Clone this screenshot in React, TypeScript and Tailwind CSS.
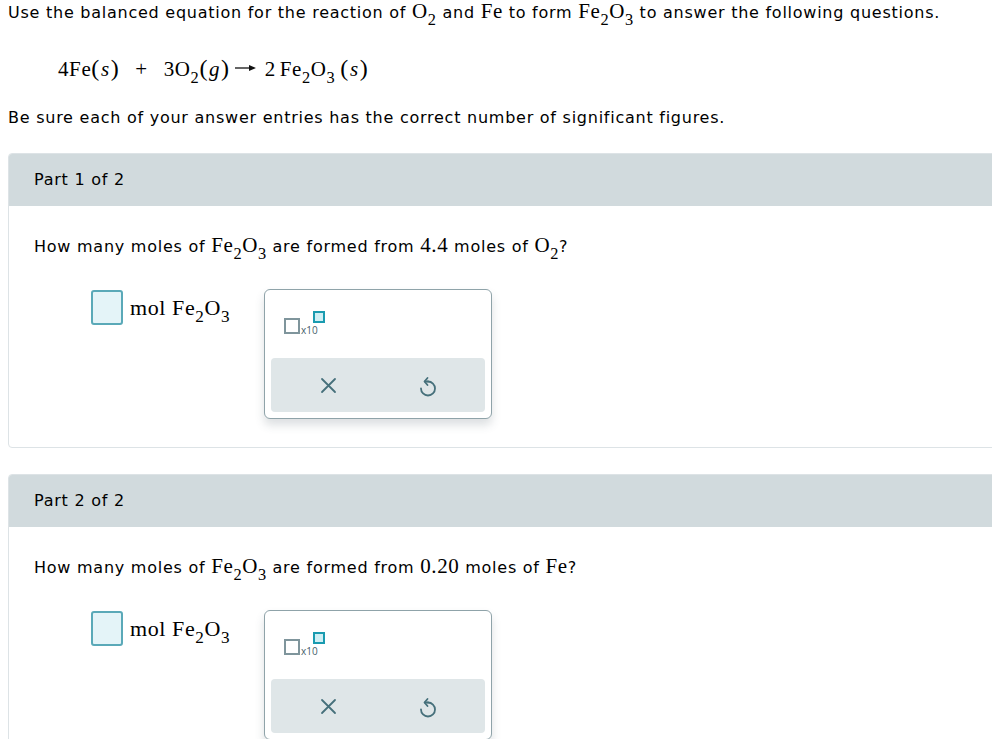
import { ReactNode } from 'react';

const sans = { fontFamily: '"DejaVu Sans", Verdana, sans-serif' };

function M({ children, size = 'text-[21px]' }: { children: ReactNode; size?: string }) {
    return (
        <span className={`${size} leading-none tracking-[0.6px]`} style={{ fontFamily: '"Liberation Serif", "Times New Roman", serif' }}>
            {children}
        </span>
    );
}

function Sub({ children }: { children: ReactNode }) {
    return <sub className="text-[0.78em] -bottom-[0.42em]">{children}</sub>;
}

function Fe2O3() {
    return (
        <M>
            Fe<Sub>2</Sub>O<Sub>3</Sub>
        </M>
    );
}

function Paren({ children }: { children: ReactNode }) {
    return (
        <>
            <span className="text-[24px]">(</span>
            <span className="italic mx-[1px]">{children}</span>
            <span className="text-[24px]">)</span>
        </>
    );
}

function CloseIcon() {
    return (
        <svg width="17" height="17" viewBox="0 0 17 17" fill="none" stroke="#46707b" strokeWidth="1.8" strokeLinecap="round">
            <path d="M2 2L15 15M15 2L2 15" />
        </svg>
    );
}

function ResetIcon() {
    return (
        <svg width="20" height="22" viewBox="0 0 20 22" fill="none" stroke="#46707b" strokeWidth="1.8" strokeLinecap="round" strokeLinejoin="round">
            <path d="M10 6.5A7 7 0 1 1 3 13.5" />
            <path d="M10 6.5H7" />
            <path d="M9.5 3L6.5 6.5L9.5 10" />
        </svg>
    );
}

function Toolbox() {
    return (
        <div className="w-[228px] h-[130px] shrink-0 rounded-md border border-[#8fa3a9] bg-white shadow-[0_6px_10px_rgba(60,80,90,0.18)] flex flex-col">
            <div className="flex-1 relative">
                <div className="absolute left-[19px] top-[28px] w-4 h-4 border-2 border-[#7f959c]" />
                <span className="absolute left-[36px] top-[35px] text-[10px] leading-none tracking-normal text-[#46606a]" style={{ fontFamily: '"Open Sans", sans-serif' }}>
                    x10
                </span>
                <div className="absolute left-[48px] top-[21px] w-3 h-3 border-2 border-[#1a9bb0] bg-[#cfeff4]" />
            </div>
            <div className="mx-[6px] mb-[6px] h-[54px] rounded bg-[#dfe6e8] flex items-center">
                <div className="flex-1 flex justify-center pl-2">
                    <CloseIcon />
                </div>
                <div className="flex-1 flex justify-center pr-2 pt-0.5">
                    <ResetIcon />
                </div>
            </div>
        </div>
    );
}

function AnswerRow() {
    return (
        <div className="flex items-start pl-[82px]">
            <div className="mt-[1px] w-[32px] h-[35px] rounded-[3px] border-2 border-[#5aa9b8] bg-[#e4f4f8]" />
            <div className="ml-[7px] mt-[8px] w-[134px]">
                <M size="text-[22px]">
                    mol Fe<Sub>2</Sub>O<Sub>3</Sub>
                </M>
            </div>
            <Toolbox />
        </div>
    );
}

function Part({ n, question }: { n: number; question: ReactNode }) {
    return (
        <div className="w-[1010px] rounded-[4px] border border-[#dde3e6] overflow-hidden">
            <div className="h-[52px] bg-[#d1dadd] flex items-center pl-[25px] text-[16px] text-black">
                Part {n} of 2
            </div>
            <div className="pt-[29px] pb-[28px]">
                <p className="pl-[25px] text-[16px] leading-6 text-black">{question}</p>
                <div className="mt-[30px]">
                    <AnswerRow />
                </div>
            </div>
        </div>
    );
}

export default function App() {
    return (
        <div className="w-[992px] h-[739px] overflow-hidden bg-white text-black tracking-[0.75px]" style={sans}>
            <div className="pl-2 pt-[1px]">
                <p className="text-[16px] leading-6">
                    Use the balanced equation for the reaction of{' '}
                    <M>
                        O<Sub>2</Sub>
                    </M>{' '}
                    and <M>Fe</M> to form <Fe2O3 /> to answer the following questions.
                </p>
                <div className="mt-[28px] h-[30px] pl-[50px] flex items-center">
                    <M size="text-[21px]">
                        4Fe
                        <Paren>s</Paren>
                        <span className="mx-[16px]">+</span>3O<Sub>2</Sub>
                        <Paren>g</Paren>
                    </M>
                    <svg className="ml-[5px] mr-[8px]" width="22" height="10" viewBox="0 0 22 10">
                        <path d="M0 5H16" stroke="#111" strokeWidth="1.3" />
                        <path d="M14 2L21 5L14 8Z" fill="#111" />
                    </svg>
                    <M size="text-[21px]">
                        2<span className="ml-[4px]">Fe</span>
                        <Sub>2</Sub>O<Sub>3</Sub>
                        <span className="ml-[5px]" />
                        <Paren>s</Paren>
                    </M>
                </div>
                <p className="mt-[23px] text-[16px] leading-6">
                    Be sure each of your answer entries has the correct number of significant figures.
                </p>
                <div className="mt-[23px]">
                    <Part
                        n={1}
                        question={
                            <>
                                How many moles of <Fe2O3 /> are formed from <M>4.4</M> moles of{' '}
                                <M>
                                    O<Sub>2</Sub>
                                </M>
                                ?
                            </>
                        }
                    />
                </div>
                <div className="mt-[26px]">
                    <Part
                        n={2}
                        question={
                            <>
                                How many moles of <Fe2O3 /> are formed from <M>0.20</M> moles of <M>Fe</M>?
                            </>
                        }
                    />
                </div>
            </div>
        </div>
    );
}
